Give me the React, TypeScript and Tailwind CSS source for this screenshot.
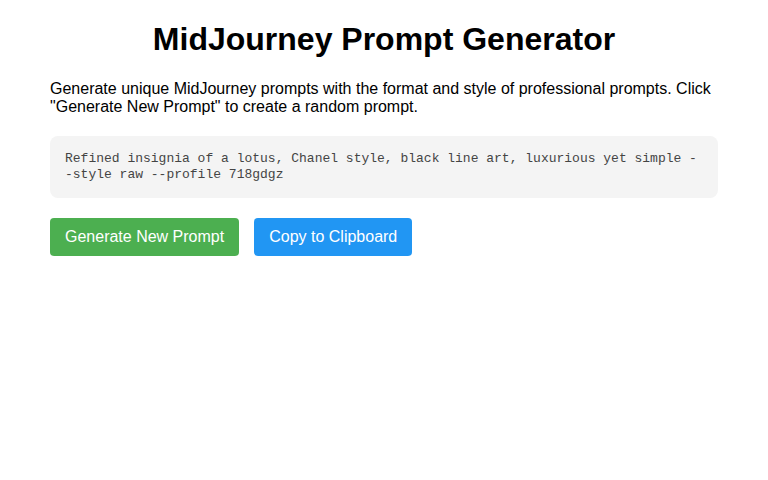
export default function App() {
  return (
    <div className="min-h-[480px] bg-white px-[50px] pt-[21px] text-black" style={{ fontFamily: '"Liberation Sans", Arial, sans-serif' }}>
      <h1 className="text-center text-[32px] font-bold leading-[37px]">MidJourney Prompt Generator</h1>
      <p className="mt-[22px] text-[16px] leading-[18px]">
        Generate unique MidJourney prompts with the format and style of professional prompts. Click "Generate New Prompt" to create a random prompt.
      </p>
      <div
        className="mt-[20px] rounded-[8px] bg-[#f4f4f4] p-[15px] text-[13px] leading-[16px] text-[#444] whitespace-pre-wrap break-words"
        style={{ fontFamily: '"Liberation Mono", "Courier New", monospace' }}
      >
        Refined insignia of a lotus, Chanel style, black line art, luxurious yet simple --style raw --profile 718gdgz
      </div>
      <div className="mt-[20px] flex gap-[15px]">
        <button className="h-[38px] rounded-[4px] bg-[#4caf50] px-[15px] text-[16px] text-white">Generate New Prompt</button>
        <button className="h-[38px] rounded-[4px] bg-[#2196f3] px-[15px] text-[16px] text-white">Copy to Clipboard</button>
      </div>
    </div>
  );
}
